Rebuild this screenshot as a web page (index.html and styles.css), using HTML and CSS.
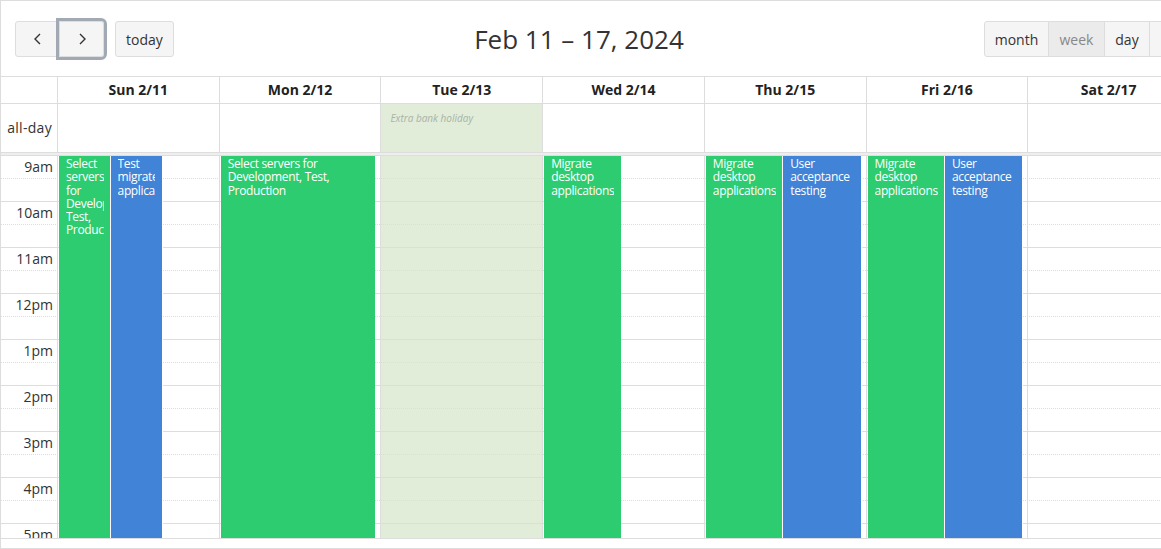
FILE: index.html
```html
<!DOCTYPE html>
<html lang="en">
<head>
    <meta charset="UTF-8">
    <title>Calendar - Week</title>
    <link rel="stylesheet" href="styles.css">
</head>
<body>
    <div class="calendar">
        <div class="toolbar">
            <div class="toolbar-chunk">
                <div class="btn-group">
                    <button class="btn btn-icon" aria-label="prev">
                        <svg width="16" height="16" viewBox="0 0 16 16"><polyline points="10,3 5,8 10,13" /></svg>
                    </button>
                    <button class="btn btn-icon focused" aria-label="next">
                        <svg width="16" height="16" viewBox="0 0 16 16"><polyline points="6,3 11,8 6,13" /></svg>
                    </button>
                </div>
                <button class="btn btn-today">today</button>
            </div>
            <h2 class="title">Feb 11 – 17, 2024</h2>
            <div class="toolbar-chunk">
                <div class="btn-group">
                    <button class="btn btn-month">month</button>
                    <button class="btn btn-week active">week</button>
                    <button class="btn btn-day">day</button>
                    <button class="btn btn-list">list</button>
                </div>
            </div>
        </div>

        <div class="view">
            <div class="row head-row">
                <div class="axis"></div>
                <div class="day-head">Sun 2/11</div>
                <div class="day-head">Mon 2/12</div>
                <div class="day-head">Tue 2/13</div>
                <div class="day-head">Wed 2/14</div>
                <div class="day-head">Thu 2/15</div>
                <div class="day-head">Fri 2/16</div>
                <div class="day-head">Sat 2/17</div>
                <div class="gutter"></div>
            </div>
            <div class="row allday-row">
                <div class="axis">all-day</div>
                <div class="allday-cell"></div>
                <div class="allday-cell"></div>
                <div class="allday-cell holiday"><div class="bg-title">Extra bank holiday</div></div>
                <div class="allday-cell"></div>
                <div class="allday-cell"></div>
                <div class="allday-cell"></div>
                <div class="allday-cell"></div>
                <div class="gutter"></div>
            </div>
            <div class="divider"></div>

            <div class="scroller">
                <div class="row bg-layer">
                    <div class="axis"></div>
                    <div class="bg-col"></div>
                    <div class="bg-col"></div>
                    <div class="bg-col holiday"></div>
                    <div class="bg-col"></div>
                    <div class="bg-col"></div>
                    <div class="bg-col"></div>
                    <div class="bg-col"></div>
                    <div class="gutter"></div>
                </div>

                <div class="slots" id="slots"></div>

                <div class="row event-layer">
                    <div class="axis"></div>
                    <div class="day-col">
                        <div class="events">
                            <div class="event green" style="left: 0%; width: 33.33%;"><div class="event-text">Select servers for Development, Test, Production</div></div>
                            <div class="event blue stacked" style="left: 33.33%; width: 33.33%;"><div class="event-text">Test migrated applications</div></div>
                        </div>
                    </div>
                    <div class="day-col">
                        <div class="events">
                            <div class="event green" style="left: 0%; width: 100%;"><div class="event-text">Select servers for Development, Test, Production</div></div>
                        </div>
                    </div>
                    <div class="day-col"></div>
                    <div class="day-col">
                        <div class="events">
                            <div class="event green" style="left: 0%; width: 50%;"><div class="event-text">Migrate desktop applications</div></div>
                        </div>
                    </div>
                    <div class="day-col">
                        <div class="events">
                            <div class="event green" style="left: 0%; width: 50%;"><div class="event-text">Migrate desktop applications</div></div>
                            <div class="event blue stacked" style="left: 50%; width: 50%;"><div class="event-text">User acceptance testing</div></div>
                        </div>
                    </div>
                    <div class="day-col">
                        <div class="events">
                            <div class="event green" style="left: 0%; width: 50%;"><div class="event-text">Migrate desktop applications</div></div>
                            <div class="event blue stacked" style="left: 50%; width: 50%;"><div class="event-text">User acceptance testing</div></div>
                        </div>
                    </div>
                    <div class="day-col"></div>
                    <div class="gutter"></div>
                </div>
            </div>
            <div class="footer"></div>
        </div>
    </div>

    <script>
        // half-hour slots from 9am, labels on the hour
        const slots = document.getElementById('slots');
        const hours = ['9am', '10am', '11am', '12pm', '1pm', '2pm', '3pm', '4pm', '5pm', '6pm'];
        hours.forEach(label => {
            ['', 'minor'].forEach(kind => {
                const row = document.createElement('div');
                row.className = 'slot ' + kind;
                const axis = document.createElement('div');
                axis.className = 'slot-label';
                axis.textContent = kind ? '' : label;
                row.appendChild(axis);
                slots.appendChild(row);
            });
        });
    </script>
</body>
</html>
```

FILE: styles.css
```css
* {
    box-sizing: border-box;
}
html {
    overflow: hidden;
}
body {
    margin: 0;
    background-color: #fff;
    color: #333;
    font-family: "Open Sans", "Segoe UI", sans-serif;
    font-size: 14px;
}
.calendar {
    width: 1209px;
    border: 1px solid #ddd;
}

/* toolbar */
.toolbar {
    display: flex;
    justify-content: space-between;
    align-items: center;
    padding: 20px 14px 19px;
}
.toolbar-chunk {
    display: flex;
    align-items: center;
}
.btn-group {
    display: flex;
}
.btn {
    height: 36px;
    padding: 0;
    border: 1px solid #ddd;
    border-radius: 3px;
    background-color: #f5f5f5;
    color: #333;
    font-family: inherit;
    font-size: 14px;
}
.btn-group .btn {
    border-radius: 0;
    margin-left: -1px;
}
.btn-group .btn:first-child {
    border-radius: 3px 0 0 3px;
    margin-left: 0;
}
.btn-group .btn:last-child {
    border-radius: 0 3px 3px 0;
}
.btn-icon {
    width: 45px;
    display: flex;
    align-items: center;
    justify-content: center;
}
.btn-icon svg polyline {
    fill: none;
    stroke: #333;
    stroke-width: 1.4;
}
.btn.focused {
    position: relative;
    z-index: 1;
    outline: 3px solid #a1aab3;
}
.btn-today {
    width: 59px;
    margin-left: 11px;
}
.btn-month { width: 65px; }
.btn-week { width: 57px; }
.btn-day { width: 46px; }
.btn-list { width: 45px; }
.btn.active {
    background-color: #ebebeb;
    color: #888;
}
.title {
    margin: 0;
    font-size: 26px;
    font-weight: normal;
    color: #333;
}

/* grid */
.view {
    border-top: 1px solid #ddd;
}
.row {
    display: grid;
    grid-template-columns: 57px repeat(7, 1fr) 18px;
}
.axis {
    border-right: 1px solid #ddd;
    text-align: right;
    padding-right: 5px;
    white-space: nowrap;
}
.head-row > div {
    height: 27px;
    border-bottom: 1px solid #ddd;
}
.day-head {
    border-right: 1px solid #ddd;
    text-align: center;
    font-weight: bold;
    line-height: 26px;
    color: #222;
}
.allday-row > div {
    height: 49px;
    border-bottom: 1px solid #ddd;
}
.allday-row .axis {
    line-height: 48px;
    letter-spacing: 0.3px;
}
.allday-cell {
    border-right: 1px solid #ddd;
    padding: 8px 9px;
}
.holiday {
    background-color: #e1ecd9;
}
.bg-title {
    font-size: 10px;
    line-height: 13px;
    font-style: italic;
    color: #aab3a6;
}
.divider {
    height: 3px;
    background-color: #eee;
    border-bottom: 1px solid #ddd;
}

.scroller {
    position: relative;
    height: 383px;
    overflow: hidden;
    border-bottom: 1px solid #ddd;
}
.bg-layer,
.event-layer {
    position: absolute;
    top: 0;
    left: 0;
    right: 0;
    bottom: 0;
}
.bg-col {
    border-right: 1px solid #ddd;
}
.slots {
    position: relative;
}
.slot {
    height: 23px;
    border-bottom: 1px dotted #ddd;
}
.slot.minor {
    border-bottom-style: solid;
}
.slot-label {
    width: 57px;
    text-align: right;
    padding-right: 5px;
    line-height: 22px;
}
.event-layer .axis {
    border-right: none;
}
.day-col {
    position: relative;
    border-right: 1px solid transparent;
}
.events {
    position: absolute;
    top: 0;
    bottom: 0;
    left: 1px;
    right: 5px;
}
.event {
    position: absolute;
    top: 0;
    height: 600px;
    padding: 0 6px;
    border: 1px solid;
    color: #fff;
    font-size: 12px;
    line-height: 13.3px;
    letter-spacing: -0.35px;
}
.event-text {
    height: 100%;
    overflow: hidden;
}
.event.green {
    background-color: #2ecc71;
    border-color: #2ecc71;
}
.event.blue {
    background-color: #4183d7;
    border-color: #4183d7;
}
.event.stacked {
    box-shadow: 0 0 0 1px #fff;
}
.footer {
    height: 9px;
}
```
